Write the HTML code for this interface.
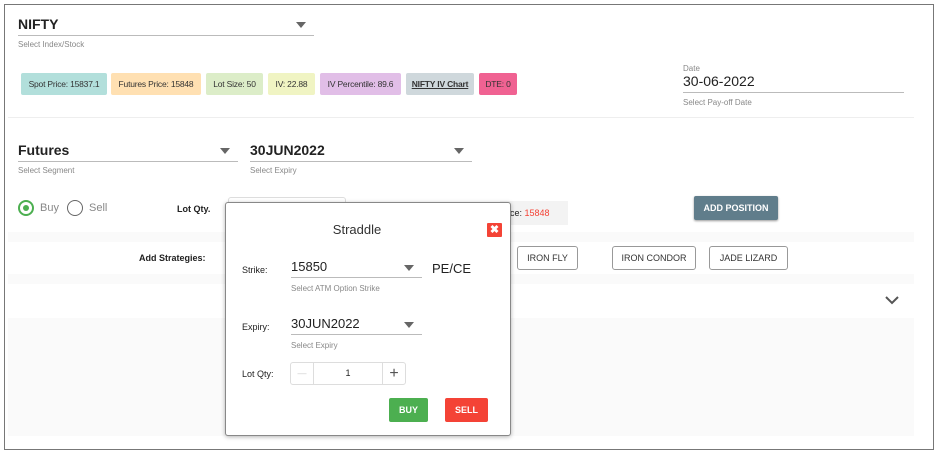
<!DOCTYPE html>
<html><head><style>
*{box-sizing:border-box;margin:0;padding:0}
body{width:939px;height:453px;background:#fff;font-family:"Liberation Sans",sans-serif;position:relative;overflow:hidden;color:#222}
.frame{position:absolute;left:4px;top:4px;width:930px;height:446px;border:1px solid #777;}
.a{position:absolute}
.sel{position:absolute;border-bottom:1px solid #bbb;font-size:14px;font-weight:bold;color:#222}
.tri{position:absolute;right:8px;top:6px;width:0;height:0;border-left:5px solid transparent;border-right:5px solid transparent;border-top:6px solid #666}
.hint{position:absolute;font-size:8px;color:#888}
.chip{position:absolute;top:73px;height:22px;font-size:8.5px;line-height:22px;text-align:center;color:#333;border-radius:2px;white-space:nowrap;letter-spacing:-0.2px}
.btn{position:absolute;border:1px solid #999;border-radius:3px;font-size:9px;text-align:center;line-height:22px;height:24px;background:#fff;color:#333;white-space:nowrap}
</style></head><body>
<div class="frame"></div>
<div class="a" style="left:8px;top:232px;width:906px;height:204px;background:#fafafa"></div>
<div class="a" style="left:8px;top:117px;width:906px;height:1px;background:#eee"></div>

<div class="sel" style="left:18px;top:16px;width:296px;height:20px">NIFTY<div class="tri"></div></div>
<div class="hint" style="left:18px;top:40px">Select Index/Stock</div>

<div class="chip" style="left:21px;width:86px;background:#b2dfdb">Spot Price: 15837.1</div>
<div class="chip" style="left:111px;width:90px;background:#ffe0b2">Futures Price: 15848</div>
<div class="chip" style="left:206px;width:57px;background:#dcedc8">Lot Size: 50</div>
<div class="chip" style="left:268px;width:47px;background:#f0f4c3">IV: 22.88</div>
<div class="chip" style="left:320px;width:81px;background:#e1bee7">IV Percentile: 89.6</div>
<div class="chip" style="left:406px;width:68px;background:#cfd8dc;text-decoration:underline;font-weight:bold">NIFTY IV Chart</div>
<div class="chip" style="left:479px;width:38px;background:#f06292">DTE: 0</div>

<div class="hint" style="left:683px;top:64px">Date</div>
<div class="sel" style="left:683px;top:73px;width:221px;height:20px;font-weight:normal;font-size:14px">30-06-2022</div>
<div class="hint" style="left:683px;top:98px">Select Pay-off Date</div>

<div class="sel" style="left:18px;top:142px;width:220px;height:20px">Futures<div class="tri"></div></div>
<div class="hint" style="left:18px;top:166px">Select Segment</div>
<div class="sel" style="left:250px;top:142px;width:222px;height:20px">30JUN2022<div class="tri"></div></div>
<div class="hint" style="left:250px;top:166px">Select Expiry</div>

<div class="a" style="left:18px;top:200px;width:16px;height:16px;border:2px solid #4caf50;border-radius:50%"><div style="margin:3px;width:6px;height:6px;border-radius:50%;background:#4caf50"></div></div>
<div class="a" style="left:40px;top:202px;font-size:11px;color:#888">Buy</div>
<div class="a" style="left:67px;top:200px;width:16px;height:16px;border:1.5px solid #666;border-radius:50%"></div>
<div class="a" style="left:89px;top:202px;font-size:11px;color:#888">Sell</div>
<div class="a" style="left:177px;top:204px;font-size:9px;font-weight:bold">Lot Qty.</div>
<div class="a" style="left:228px;top:197px;width:118px;height:24px;border:1px solid #ddd;border-radius:3px"></div>
<div class="a" style="left:500px;top:201px;width:68px;height:24px;background:#f3f3f3;font-size:9px;line-height:24px;padding-left:8px">ice: <span style="color:#f44336">15848</span></div>
<div class="a" style="left:694px;top:196px;width:84px;height:24px;background:#607d8b;color:#fff;font-size:9px;font-weight:bold;text-align:center;line-height:24px;border-radius:2px;box-shadow:0 1px 2px #999">ADD POSITION</div>

<div class="a" style="left:8px;top:242px;width:906px;height:32px;background:#fff"></div>
<div class="a" style="left:139px;top:253px;font-size:9px;font-weight:bold">Add Strategies:</div>
<div class="btn" style="left:517px;top:246px;width:61px">IRON FLY</div>
<div class="btn" style="left:612px;top:246px;width:84px">IRON CONDOR</div>
<div class="btn" style="left:709px;top:246px;width:79px">JADE LIZARD</div>

<div class="a" style="left:8px;top:284px;width:906px;height:34px;background:#fff"></div>
<svg class="a" style="left:884px;top:294px" width="16" height="12"><path d="M2 3 L8 9 L14 3" stroke="#555" stroke-width="2" fill="none"/></svg>

<div class="a" style="left:225px;top:202px;width:286px;height:234px;background:#fff;border:1px solid #888;border-radius:3px;box-shadow:0 1px 4px rgba(0,0,0,.3)">
 <div class="a" style="left:0;top:19px;width:262px;text-align:center;font-size:13px;color:#333">Straddle</div>
 <div class="a" style="left:261px;top:20px;width:15px;height:14px;background:#f44336;color:#fff;font-size:11px;font-weight:bold;text-align:center;line-height:14px;border-radius:1px">✖</div>
 <div class="a" style="left:16px;top:62px;font-size:9px">Strike:</div>
 <div class="sel" style="left:65px;top:56px;width:131px;height:19px;font-weight:normal;font-size:13px">15850<div class="tri"></div></div>
 <div class="a" style="left:206px;top:58px;font-size:13px">PE/CE</div>
 <div class="hint" style="left:65px;top:81px">Select ATM Option Strike</div>
 <div class="a" style="left:16px;top:119px;font-size:9px">Expiry:</div>
 <div class="sel" style="left:65px;top:113px;width:131px;height:19px;font-weight:normal;font-size:13px">30JUN2022<div class="tri"></div></div>
 <div class="hint" style="left:65px;top:138px">Select Expiry</div>
 <div class="a" style="left:16px;top:166px;font-size:9px">Lot Qty:</div>
 <div class="a" style="left:64px;top:159px;width:116px;height:23px;border:1px solid #ddd;border-radius:3px;font-size:9px;text-align:center;line-height:21px">
  <div class="a" style="left:0;top:0;width:23px;height:21px;border-right:1px solid #ddd;color:#ccc">—</div>1
  <div class="a" style="right:0;top:0;width:23px;height:21px;border-left:1px solid #ddd;font-size:16px;color:#555">+</div></div>
 <div class="a" style="left:163px;top:195px;width:39px;height:24px;background:#4caf50;color:#fff;font-size:9px;font-weight:bold;text-align:center;line-height:24px;border-radius:2px">BUY</div>
 <div class="a" style="left:219px;top:195px;width:43px;height:24px;background:#f44336;color:#fff;font-size:9px;font-weight:bold;text-align:center;line-height:24px;border-radius:2px">SELL</div>
</div>
</body></html>
